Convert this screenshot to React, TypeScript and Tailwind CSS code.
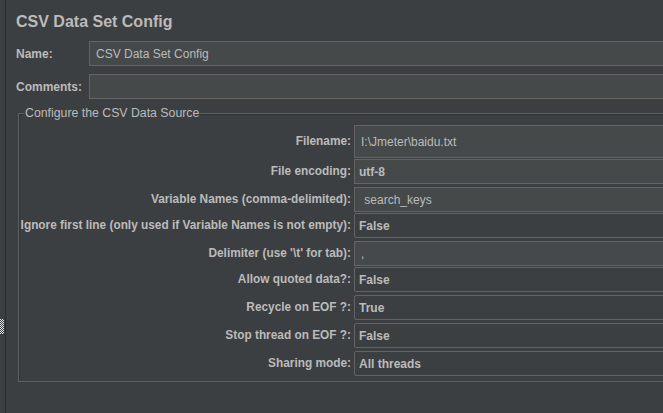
import React from 'react'

type Field = {
  label: string
  value: string
  kind: 'text' | 'combo' | 'select'
  h?: number
  mt: number
}

const fields: Field[] = [
  { label: 'Filename:', value: 'I:\\Jmeter\\baidu.txt', kind: 'text', h: 33, mt: 0 },
  { label: 'File encoding:', value: 'utf-8', kind: 'combo', mt: 1 },
  { label: 'Variable Names (comma-delimited):', value: ' search_keys', kind: 'text', mt: 3 },
  { label: 'Ignore first line (only used if Variable Names is not empty):', value: 'False', kind: 'select', mt: 1 },
  { label: "Delimiter (use '\\t' for tab):", value: ',', kind: 'text', mt: 3 },
  { label: 'Allow quoted data?:', value: 'False', kind: 'select', mt: 1 },
  { label: 'Recycle on EOF ?:', value: 'True', kind: 'select', mt: 3 },
  { label: 'Stop thread on EOF ?:', value: 'False', kind: 'select', mt: 3 },
  { label: 'Sharing mode:', value: 'All threads', kind: 'select', mt: 3 },
]

function Grip() {
  // little dotted handle of the split pane
  const dots = []
  for (let y = 0; y < 15; y++) {
    for (let x = 0; x < 4; x++) {
      if ((x + y) % 2 === 0) dots.push(<rect key={`${x}-${y}`} x={x} y={y} width={1} height={1} fill="#e8e8e8" />)
    }
  }
  return (
    <svg width={4} height={15} viewBox="0 0 4 15" className="block">
      {dots}
    </svg>
  )
}

function FieldBox({ f }: { f: Field }) {
  const base = 'flex-1 flex items-center border border-[#646464] text-[12px] text-[#bbbbbb] whitespace-pre'
  if (f.kind === 'text') {
    return (
      <div className={`${base} bg-[#45494a] pl-[6px]`} style={{ height: f.h ?? 25 }}>
        {f.value}
      </div>
    )
  }
  if (f.kind === 'combo') {
    return <div className={`${base} h-[25px] bg-[#45494a] pl-[4px] font-bold`}>{f.value}</div>
  }
  return <div className={`${base} h-[25px] bg-[#3c3f41] rounded-[2px] pl-[4px] font-bold`}>{f.value}</div>
}

export default function App() {
  return (
    <div
      className="w-[663px] h-[413px] overflow-hidden bg-[#3c3f41] flex text-[#bbbbbb]"
      style={{ fontFamily: '"Liberation Sans", Arial, sans-serif' }}
    >
      <div className="w-[5px] shrink-0 flex flex-col">
        <div className="mt-[319px]">
          <Grip />
        </div>
      </div>
      <div className="w-px shrink-0 bg-[#2b2b2b]" />

      <div className="w-[720px] shrink-0 pl-[10px] pt-[10px]">
        <h1 className="h-[24px] flex items-center text-[16px] font-bold">CSV Data Set Config</h1>

        <div className="mt-[7px] flex items-center">
          <span className="w-[73px] text-[12px] font-bold">Name:</span>
          <div className="flex-1 h-[25px] flex items-center pl-[6px] bg-[#45494a] border border-[#646464] text-[12px]">
            CSV Data Set Config
          </div>
        </div>
        <div className="mt-[8px] flex items-center">
          <span className="w-[73px] text-[12px] font-bold">Comments:</span>
          <div className="flex-1 h-[25px] bg-[#45494a] border border-[#646464]" />
        </div>

        <div className="relative mt-[14px] ml-[2px] border border-[#5e6163] shadow-[inset_1px_1px_0_#323435] pt-[11px] pb-[5px]">
          <span className="absolute left-[5px] top-[-8px] px-[1px] bg-[#3c3f41] text-[12.3px] leading-[14px]">
            Configure the CSV Data Source
          </span>
          {fields.map((f) => (
            <div key={f.label} className="flex items-center" style={{ marginTop: f.mt }}>
              <span className="w-[335px] shrink-0 pr-[3px] text-right text-[11.85px] font-bold whitespace-nowrap">
                {f.label}
              </span>
              <FieldBox f={f} />
            </div>
          ))}
        </div>
      </div>
    </div>
  )
}
